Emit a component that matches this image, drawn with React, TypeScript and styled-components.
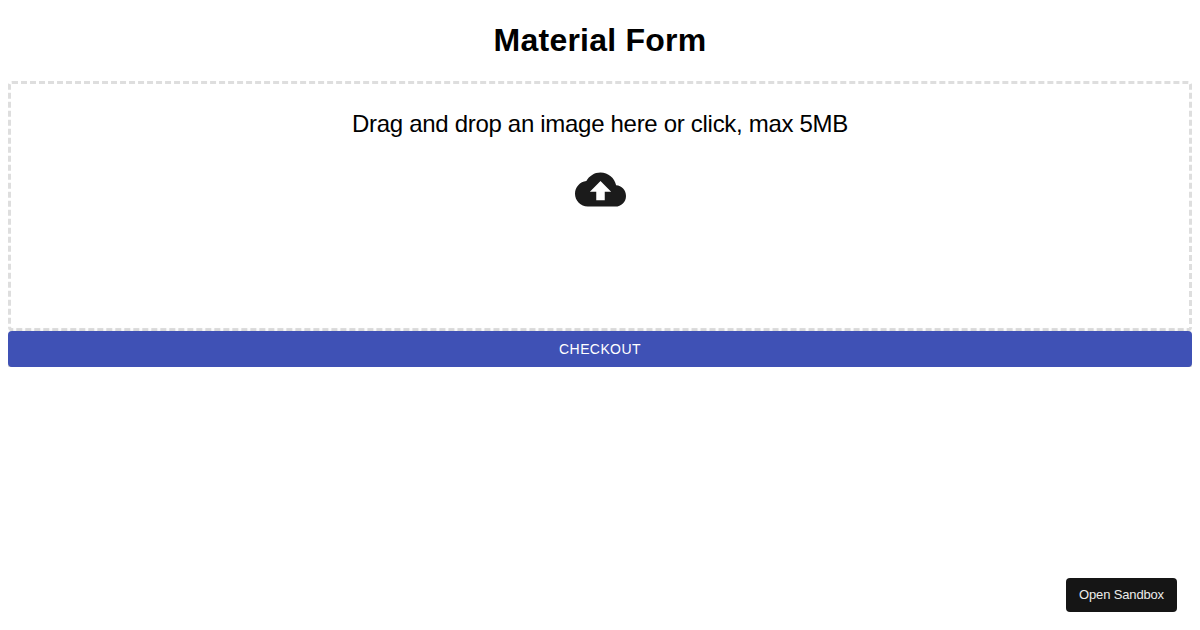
import styled, { createGlobalStyle } from 'styled-components';

const GlobalStyle = createGlobalStyle`
  body {
    margin: 8px;
    background: #fff;
    font-family: 'Liberation Sans', Arial, sans-serif;
  }
`;

function App() {
  return (
    <>
      <GlobalStyle />
      <Title>Material Form</Title>
      <Form>
        <DropZone>
          <DropText>Drag and drop an image here or click, max 5MB</DropText>
          <CloudIcon viewBox="0 0 24 24" aria-hidden="true">
            <path d="M19.35 10.04C18.67 6.59 15.64 4 12 4 9.11 4 6.6 5.64 5.35 8.04 2.34 8.36 0 10.91 0 14c0 3.31 2.69 6 6 6h13c2.76 0 5-2.24 5-5 0-2.64-2.05-4.78-4.65-4.96zM14 13v4h-4v-4H7l5-5 5 5h-3z" />
          </CloudIcon>
        </DropZone>
        <SubmitButton type="button">Checkout</SubmitButton>
      </Form>
      <SandboxLink>Open Sandbox</SandboxLink>
    </>
  );
}

const Title = styled.h1`
  margin: 14.44px 0 21.44px;
  text-align: center;
  font-size: 32px;
  font-weight: 700;
  letter-spacing: 0.23px;
  color: #000;
`;

const Form = styled.form`
  display: flex;
  flex-direction: column;
`;

const DropZone = styled.div`
  box-sizing: border-box;
  min-height: 250px;
  border: 3px dashed #dedede;
  border-radius: 4px;
  text-align: center;
`;

const DropText = styled.p`
  margin: 24px 0;
  font-size: 24px;
  line-height: 32px;
  letter-spacing: -0.3px;
  color: #000;
`;

const CloudIcon = styled.svg`
  display: block;
  width: 51px;
  height: 51px;
  margin: 0 auto;
  fill: #1b1b1b;
`;

const SubmitButton = styled.button`
  height: 36px;
  padding: 6px 16px;
  border: 0;
  border-radius: 4px;
  background: #3f51b5;
  color: #fff;
  font-family: 'Liberation Sans', Arial, sans-serif;
  font-size: 14px;
  font-weight: 400;
  letter-spacing: 0.4px;
  text-transform: uppercase;
  box-shadow: 0 3px 1px -2px rgba(0, 0, 0, 0.2), 0 2px 2px 0 rgba(0, 0, 0, 0.14),
    0 1px 5px 0 rgba(0, 0, 0, 0.12);
`;

const SandboxLink = styled.a`
  position: fixed;
  right: 23px;
  bottom: 18px;
  box-sizing: border-box;
  width: 111px;
  height: 34px;
  padding-bottom: 2px;
  display: flex;
  align-items: center;
  justify-content: center;
  border-radius: 4px;
  background: #151515;
  color: #ececec;
  font-family: 'Liberation Sans', Arial, sans-serif;
  font-size: 13px;
  letter-spacing: -0.15px;
`;

export default App;
